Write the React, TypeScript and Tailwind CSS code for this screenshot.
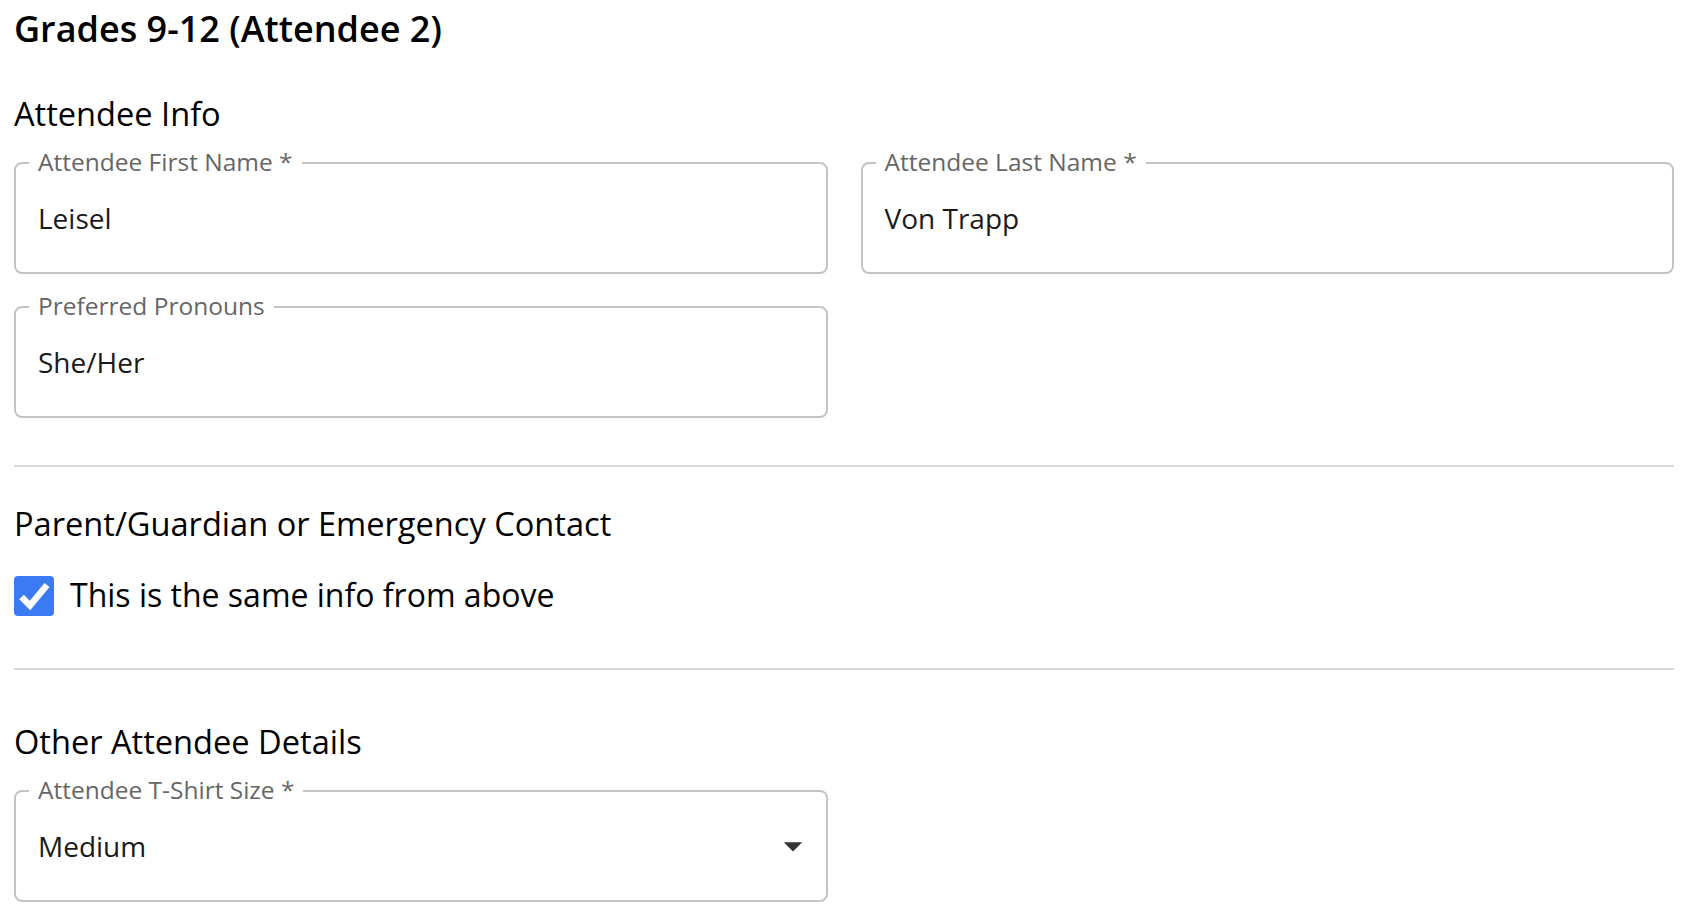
import React from "react";

type FieldProps = {
  label: string;
  value: string;
  select?: boolean;
};

// Outlined text field with the label sitting in a notch of the top border.
function OutlinedField({ label, value, select }: FieldProps) {
  return (
    <div className="relative flex h-[112px] items-center rounded-lg border-2 border-[#c4c4c4] pl-[22px] pr-[11px]">
      <span className="absolute left-[13px] top-[-14px] bg-white px-[9px] text-[24.5px] leading-[24px] text-[#666666]">
        {label}
      </span>
      <span className="flex-1 text-[28px] leading-[28px] text-[#1a1a1a]">{value}</span>
      {select && (
        <svg viewBox="0 0 24 24" className="h-[44px] w-[44px] shrink-0" aria-hidden="true">
          <path d="M7 10l5 5 5-5z" fill="#333333" />
        </svg>
      )}
    </div>
  );
}

function CheckedBox() {
  return (
    <svg viewBox="0 0 40 40" className="h-[40px] w-[40px] shrink-0" aria-hidden="true">
      <rect x="0" y="0" width="40" height="40" rx="4" fill="#3b7af3" />
      <path
        d="M7.5 21 L16 29.5 L33 9"
        fill="none"
        stroke="#ffffff"
        strokeWidth="6.5"
        strokeLinejoin="miter"
      />
    </svg>
  );
}

function Divider({ className }: { className: string }) {
  return <div className={`h-[2px] w-full bg-[#d8d9db] ${className}`} />;
}

export default function App() {
  return (
    <div className="min-h-screen bg-white pl-[14px] pr-[20px] pt-[11px] font-['Open_Sans','Noto_Sans',sans-serif] text-black">
      <h1 className="text-[36px] font-semibold leading-[36px]">Grades 9-12 (Attendee 2)</h1>

      <h2 className="mt-[51px] text-[32.6px] font-normal leading-[32px]">Attendee Info</h2>
      <div className="mt-[32px] grid grid-cols-2 gap-x-[33px] gap-y-[32px]">
        <OutlinedField label="Attendee First Name *" value="Leisel" />
        <OutlinedField label="Attendee Last Name *" value="Von Trapp" />
        <OutlinedField label="Preferred Pronouns" value="She/Her" />
      </div>

      <Divider className="mt-[47px]" />

      <h2 className="mt-[41px] text-[32.6px] font-normal leading-[32px]">
        Parent/Guardian or Emergency Contact
      </h2>
      <label className="mt-[36px] flex items-center gap-[16px]">
        <CheckedBox />
        <span className="pb-[3px] text-[32px] leading-[32px]">This is the same info from above</span>
      </label>

      <Divider className="mt-[52px]" />

      <h2 className="mt-[56px] text-[32.6px] font-normal leading-[32px]">Other Attendee Details</h2>
      <div className="mt-[32px] grid grid-cols-2 gap-x-[33px]">
        <OutlinedField label="Attendee T-Shirt Size *" value="Medium" select />
      </div>
    </div>
  );
}
